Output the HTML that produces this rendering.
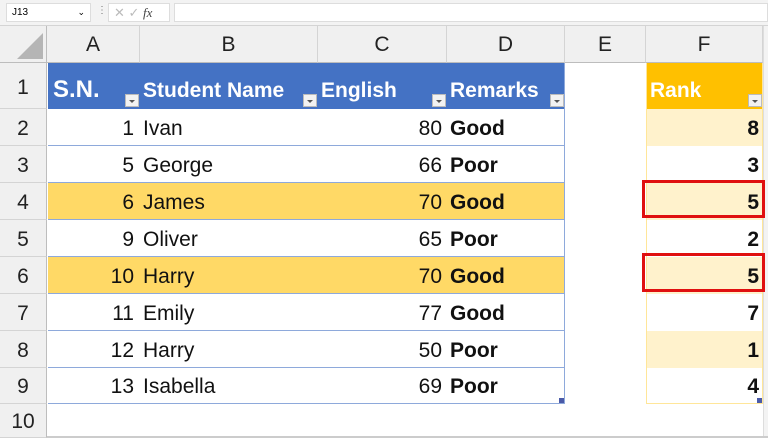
<!DOCTYPE html>
<html><head><style>
*{margin:0;padding:0;box-sizing:border-box}
body{width:768px;height:438px;overflow:hidden;background:#fff;font-family:"Liberation Sans",sans-serif;position:relative}
.a{position:absolute}
.fb{left:0;top:0;width:768px;height:26px;background:#f3f3f3;border-bottom:1px solid #d4d4d4}
.ch{top:26px;height:37px;background:#f0f0f0;border-right:1px solid #d4d4d4;border-bottom:1px solid #bdbdbd;text-align:center;font-size:21px;line-height:37px;color:#222}
.rh{left:0;width:47px;background:#f0f0f0;border-bottom:1px solid #d4d4d4;border-right:1px solid #bdbdbd;text-align:center;font-size:21px;color:#222}
.c{font-size:21px;color:#111;white-space:nowrap}
.r{text-align:right}
.b{font-weight:bold}
.hd{color:#fff;font-weight:bold;font-size:22px}
.dd{width:14px;height:13px;background:#f2f2f2;border:1px solid #bbb}
.dd:after{content:"";position:absolute;left:3px;top:5px;border-left:3px solid transparent;border-right:3px solid transparent;border-top:3px solid #555}
</style></head><body>
<div class="a fb"></div>
<div class="a" style="left:6px;top:3px;width:85px;height:19px;background:#fff;border:1px solid #ddd;font-size:10px;line-height:17px;padding-left:5px">J13<span style="position:absolute;right:5px;font-size:9px">⌄</span></div>
<div class="a" style="left:97px;top:5px;font-size:10px;color:#777">⋮</div>
<div class="a" style="left:108px;top:3px;width:62px;height:19px;background:#fff;border:1px solid #ddd;font-size:13px;line-height:17px;color:#bbb;padding-left:5px">✕ ✓ <i style="color:#444;font-family:'Liberation Serif',serif">fx</i></div>
<div class="a" style="left:174px;top:3px;width:594px;height:19px;background:#fff;border:1px solid #ddd"></div>
<div class="a" style="left:0;top:26px;width:47px;height:37px;background:#f0f0f0;border-right:1px solid #bdbdbd;border-bottom:1px solid #bdbdbd"></div>
<div class="a" style="left:17px;top:33px;width:0;height:0;border-left:26px solid transparent;border-bottom:26px solid #b5b5b5"></div>
<div class="a ch" style="left:47px;width:93px">A</div>
<div class="a ch" style="left:140px;width:178px">B</div>
<div class="a ch" style="left:318px;width:129px">C</div>
<div class="a ch" style="left:447px;width:118px">D</div>
<div class="a ch" style="left:565px;width:81px">E</div>
<div class="a ch" style="left:646px;width:117px">F</div>
<div class="a" style="left:763px;top:26px;width:5px;height:412px;background:#f3f3f3;border-left:1px solid #ddd"></div>
<div class="a" style="left:0;top:436px;width:768px;height:2px;background:#ccc"></div>
<div class="a rh" style="top:63px;height:46px;line-height:50px">1</div>
<div class="a rh" style="top:109px;height:37px;line-height:39px">2</div>
<div class="a rh" style="top:146px;height:37px;line-height:39px">3</div>
<div class="a rh" style="top:183px;height:37px;line-height:39px">4</div>
<div class="a rh" style="top:220px;height:37px;line-height:39px">5</div>
<div class="a rh" style="top:257px;height:37px;line-height:39px">6</div>
<div class="a rh" style="top:294px;height:37px;line-height:39px">7</div>
<div class="a rh" style="top:331px;height:37px;line-height:39px">8</div>
<div class="a rh" style="top:368px;height:36px;line-height:38px">9</div>
<div class="a rh" style="top:404px;height:34px;line-height:36px">10</div>
<div class="a" style="left:48px;top:63px;width:517px;height:46px;background:#4472c4"></div>
<div class="a hd" style="left:53px;top:76px;font-size:24px">S.N.</div>
<div class="a hd" style="left:143px;top:79px;font-size:21px">Student Name</div>
<div class="a hd" style="left:321px;top:79px;font-size:21px">English</div>
<div class="a hd" style="left:450px;top:79px;font-size:21px">Remarks</div>
<div class="a dd" style="left:125px;top:94px"></div>
<div class="a dd" style="left:303px;top:94px"></div>
<div class="a dd" style="left:432px;top:94px"></div>
<div class="a dd" style="left:550px;top:94px"></div>
<div class="a" style="left:647px;top:63px;width:116px;height:46px;background:#ffc000"></div>
<div class="a hd" style="left:650px;top:79px;font-size:21px">Rank</div>
<div class="a dd" style="left:748px;top:94px"></div>
<div class="a" style="left:48px;top:183px;width:517px;height:37px;background:#ffd966"></div>
<div class="a" style="left:48px;top:257px;width:517px;height:37px;background:#ffd966"></div>
<div class="a" style="left:48px;top:145px;width:517px;height:1px;background:#8ea9db"></div>
<div class="a" style="left:48px;top:182px;width:517px;height:1px;background:#8ea9db"></div>
<div class="a" style="left:48px;top:219px;width:517px;height:1px;background:#8ea9db"></div>
<div class="a" style="left:48px;top:256px;width:517px;height:1px;background:#8ea9db"></div>
<div class="a" style="left:48px;top:293px;width:517px;height:1px;background:#8ea9db"></div>
<div class="a" style="left:48px;top:330px;width:517px;height:1px;background:#8ea9db"></div>
<div class="a" style="left:48px;top:367px;width:517px;height:1px;background:#8ea9db"></div>
<div class="a" style="left:48px;top:403px;width:517px;height:1px;background:#8ea9db"></div>
<div class="a" style="left:564px;top:63px;width:1px;height:341px;background:#8ea9db"></div>
<div class="a" style="left:559px;top:398px;width:5px;height:5px;background:#4a5aa8"></div>
<div class="a" style="left:647px;top:109px;width:116px;height:37px;background:#fff2cc"></div>
<div class="a" style="left:647px;top:183px;width:116px;height:37px;background:#fff2cc"></div>
<div class="a" style="left:647px;top:257px;width:116px;height:37px;background:#fff2cc"></div>
<div class="a" style="left:647px;top:331px;width:116px;height:37px;background:#fff2cc"></div>
<div class="a" style="left:646px;top:63px;width:1px;height:341px;background:#ffe699"></div>
<div class="a" style="left:762px;top:63px;width:1px;height:341px;background:#ffe699"></div>
<div class="a" style="left:647px;top:403px;width:116px;height:1px;background:#ffe699"></div>
<div class="a" style="left:757px;top:398px;width:5px;height:5px;background:#4a5aa8"></div>
<div class="a" style="left:642px;top:180px;width:123px;height:38px;border:3px solid #e01010"></div>
<div class="a" style="left:642px;top:253px;width:123px;height:39px;border:3px solid #e01010"></div>
<div class="a c r" style="left:48px;width:86px;top:117px">1</div><div class="a c" style="left:143px;top:117px">Ivan</div><div class="a c r" style="left:318px;width:124px;top:117px">80</div><div class="a c b" style="left:450px;top:117px">Good</div><div class="a c b r" style="left:647px;width:112px;top:117px">8</div>
<div class="a c r" style="left:48px;width:86px;top:154px">5</div><div class="a c" style="left:143px;top:154px">George</div><div class="a c r" style="left:318px;width:124px;top:154px">66</div><div class="a c b" style="left:450px;top:154px">Poor</div><div class="a c b r" style="left:647px;width:112px;top:154px">3</div>
<div class="a c r" style="left:48px;width:86px;top:191px">6</div><div class="a c" style="left:143px;top:191px">James</div><div class="a c r" style="left:318px;width:124px;top:191px">70</div><div class="a c b" style="left:450px;top:191px">Good</div><div class="a c b r" style="left:647px;width:112px;top:191px">5</div>
<div class="a c r" style="left:48px;width:86px;top:228px">9</div><div class="a c" style="left:143px;top:228px">Oliver</div><div class="a c r" style="left:318px;width:124px;top:228px">65</div><div class="a c b" style="left:450px;top:228px">Poor</div><div class="a c b r" style="left:647px;width:112px;top:228px">2</div>
<div class="a c r" style="left:48px;width:86px;top:265px">10</div><div class="a c" style="left:143px;top:265px">Harry</div><div class="a c r" style="left:318px;width:124px;top:265px">70</div><div class="a c b" style="left:450px;top:265px">Good</div><div class="a c b r" style="left:647px;width:112px;top:265px">5</div>
<div class="a c r" style="left:48px;width:86px;top:302px">11</div><div class="a c" style="left:143px;top:302px">Emily</div><div class="a c r" style="left:318px;width:124px;top:302px">77</div><div class="a c b" style="left:450px;top:302px">Good</div><div class="a c b r" style="left:647px;width:112px;top:302px">7</div>
<div class="a c r" style="left:48px;width:86px;top:339px">12</div><div class="a c" style="left:143px;top:339px">Harry</div><div class="a c r" style="left:318px;width:124px;top:339px">50</div><div class="a c b" style="left:450px;top:339px">Poor</div><div class="a c b r" style="left:647px;width:112px;top:339px">1</div>
<div class="a c r" style="left:48px;width:86px;top:375px">13</div><div class="a c" style="left:143px;top:375px">Isabella</div><div class="a c r" style="left:318px;width:124px;top:375px">69</div><div class="a c b" style="left:450px;top:375px">Poor</div><div class="a c b r" style="left:647px;width:112px;top:375px">4</div>
</body></html>
